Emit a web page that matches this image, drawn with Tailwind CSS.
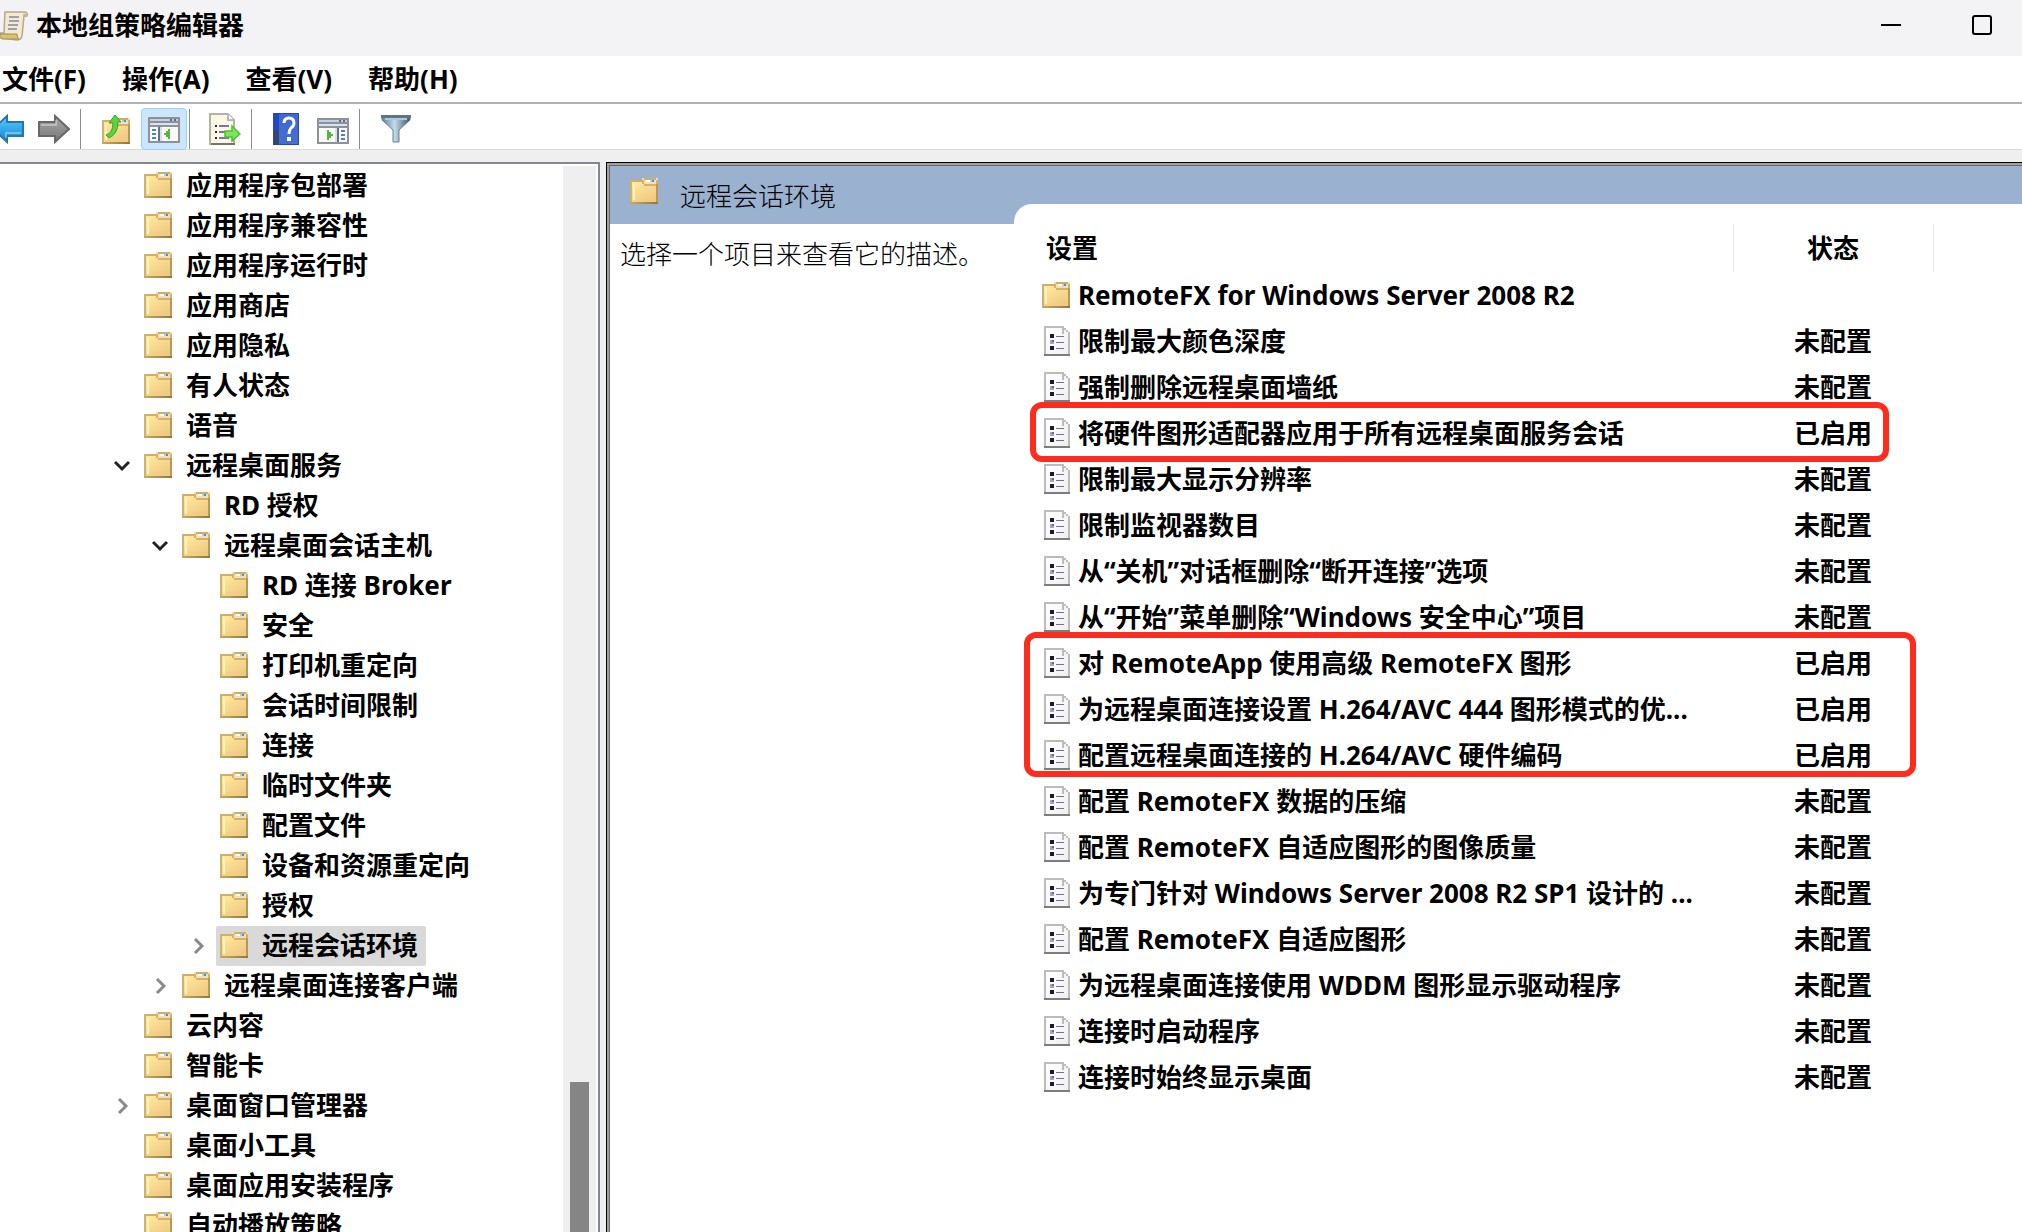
<!DOCTYPE html>
<html lang="zh-CN">
<head>
<meta charset="utf-8">
<meta name="viewport" content="width=device-width, initial-scale=1">
<title>本地组策略编辑器</title>
<script src="https://cdn.jsdelivr.net/npm/@tailwindcss/browser@4"></script>
</head>
<body class="flex h-screen flex-col overflow-hidden bg-[#efefef] font-['Noto_Sans','Noto_Sans_CJK_SC',sans-serif] text-[26px] leading-10 font-bold text-black">

<svg class="absolute size-0" aria-hidden="true">
  <defs>
    <linearGradient id="gFolder" x1="0" y1="0" x2="0.6" y2="1"><stop offset="0" stop-color="#ffeb9f"/><stop offset="1" stop-color="#f0ca82"/></linearGradient>
    <linearGradient id="gPage" x1="0" y1="0" x2="1" y2="1"><stop offset="0" stop-color="#ffffff"/><stop offset="1" stop-color="#f0f0f0"/></linearGradient>
    <linearGradient id="gBlue" x1="0" y1="0" x2="0" y2="1"><stop offset="0" stop-color="#1583d4"/><stop offset="1" stop-color="#58cdfb"/></linearGradient>
    <linearGradient id="gGray" x1="0" y1="0" x2="0" y2="1"><stop offset="0" stop-color="#a8a8a8"/><stop offset="1" stop-color="#777777"/></linearGradient>
    <linearGradient id="gHelp" x1="0" y1="0" x2="0" y2="1"><stop offset="0" stop-color="#3f66dd"/><stop offset="1" stop-color="#4570c8"/></linearGradient>
    <linearGradient id="gFunnel" x1="0" y1="0" x2="1" y2="0"><stop offset="0" stop-color="#5f7f98"/><stop offset="0.45" stop-color="#c4dcea"/><stop offset="1" stop-color="#3c5468"/></linearGradient>
    <linearGradient id="gEdge" x1="0" y1="0" x2="1" y2="0"><stop offset="0" stop-color="#c7a966"/><stop offset="1" stop-color="#94753a"/></linearGradient>
  </defs>
  <symbol id="folder" viewBox="0 0 28 26" shape-rendering="crispEdges">
    <path d="M0 2H12V0H28V26H0Z" fill="#d2ae64"/>
    <path d="M2 4H26V24H2Z" fill="url(#gFolder)"/>
    <path d="M4 6V22" stroke="#fff3b5" stroke-width="2"/>
    <path d="M0 2H2V24H0Z" fill="#cdb274"/>
    <path d="M26 6H28V24H26Z" fill="#b5985a"/>
    <path d="M0 24H28V26H0Z" fill="url(#gEdge)"/>
    <path d="M12 2H28V6H26V8H14V6H12Z" fill="#d8ae68"/>
    <path d="M14 2H26V6H14Z" fill="#f5dfb0"/>
    <path d="M16 2H20V4H16Z" fill="#ffffff"/><path d="M20 2H22V4H20Z" fill="#a8d3f5"/><path d="M22 2H24V4H22Z" fill="#3c94e4"/>
    <path d="M12 0H14V2H12ZM26 0H28V2H26Z" fill="#f0ddb4"/>
  </symbol>
  <symbol id="policy" viewBox="0 0 26 30" shape-rendering="crispEdges">
    <path d="M0 0H20V2H22V4H24V6H26V30H0Z" fill="#bcbcbc"/>
    <path d="M2 2H18V8H24V28H2Z" fill="url(#gPage)"/>
    <path d="M20 4H22V6H24V8H20Z" fill="#f4f4f4"/>
    <path d="M0 28H26V30H0Z" fill="#7d7d7d"/>
    <path d="M6 8H10V12H6ZM6 20H10V24H6Z" fill="#1d1a28"/><path d="M6 14H10V18H6Z" fill="#a9a4bd"/><path d="M8 14H10V16H8Z" fill="#6d6882"/>
    <path d="M12 10H20V11H12ZM12 16H20V17H12ZM12 22H20V23H12Z" fill="#77718f"/>
  </symbol>
  <symbol id="pane" viewBox="0 0 32 26" shape-rendering="crispEdges">
    <path d="M0 0H32V26H0Z" fill="#8e9298"/><path d="M2 2H30V4H2Z" fill="#c6d0dc"/>
    <path d="M2 4H30V6H2Z" fill="#8492a4"/>
    <path d="M2 6H30V8H2Z" fill="#dbe3ee"/><path d="M2 10H30V24H2Z" fill="#fafafa"/>
    <path d="M10 10H12V24H10Z" fill="#66728c"/><path d="M12 10H14V24H12Z" fill="#e0e0e0"/>
    <path d="M4 12H8V14H4ZM4 16H8V18H4ZM4 20H8V22H4Z" fill="#4d83bf"/>
    <path d="M22 12V22H20V20H18V18H16V16H18V14H20V12Z" fill="#55b838"/>
  </symbol>
  <symbol id="arrow" viewBox="0 0 32 30">
    <path d="M1 8H17V2L31 15L17 28V22H1Z" stroke-width="2"/>
    <path d="M3 11H18V6" fill="none" stroke="#ffffff" stroke-opacity=".35" stroke-width="2"/>
  </symbol>
</svg>

<header class="flex h-14 shrink-0 items-center bg-[#f3f2f4] pb-1.5">
  <svg class="h-8 w-7 shrink-0" viewBox="0 0 28 32" aria-hidden="true">
    <path d="M5 3H24Q28 3 27 7H24L22 27Q21 31 17 31L2 29Q-2 28 0 24H4Z" fill="#f3ead0" stroke="#b3a98d" stroke-width="1.5"/>
    <path d="M0 25H17Q17 29 19 30L2 30Q-1 28 0 25Z" fill="#dfc06d" stroke="#9c8b5c"/>
    <path d="M23 5Q27 4 27 8H24Z" fill="#c9b68a"/>
    <path d="M9 8H19M9 12H19M8 16H18M8 20H17" stroke="#9aa0b0" stroke-width="2"/>
  </svg>
  <h1 class="ml-2 flex-1">本地组策略编辑器</h1>
  <div class="mr-[30px] flex items-center gap-[71px]">
    <button aria-label="最小化" class="flex h-12 items-center"><svg class="size-5" viewBox="0 0 20 20"><path d="M0 10H20" stroke="#000" stroke-width="2"/></svg></button>
    <button aria-label="最大化" class="flex h-12 items-center"><svg class="size-5" viewBox="0 0 20 20"><rect x="1" y="1" width="18" height="18" rx="2" fill="none" stroke="#000" stroke-width="2"/></svg></button>
  </div>
</header>

<nav class="flex h-12 shrink-0 items-center gap-9 border-b-2 border-[#b1b2b6] bg-white pl-0.5" aria-label="菜单">
  <button>文件(F)</button><button>操作(A)</button><button>查看(V)</button><button>帮助(H)</button>
</nav>

<div class="flex h-[46px] shrink-0 items-center border-b border-[#d9d9d9] bg-white pt-1" role="toolbar" aria-label="工具栏">
  <button aria-label="后退" class="-ml-2"><svg class="h-[30px] w-8 rotate-180" fill="url(#gBlue)" stroke="#2676ae"><use href="#arrow"/></svg></button>
  <button aria-label="前进" class="ml-3.5"><svg class="h-[30px] w-8" fill="url(#gGray)" stroke="#686868"><use href="#arrow"/></svg></button>
  <span class="ml-2.5 h-10 w-px bg-[#8c8c8c]"></span>
  <button aria-label="上一级" class="ml-5">
    <svg class="h-[30px] w-[30px]" viewBox="0 0 30 30"><use href="#folder" x="1" y="4" width="28" height="26"/>
      <path d="M5 21Q12 19 12 9H8L14 1L20 8H17Q17 20 8 24Z" fill="#5bd340" stroke="#35a428"/></svg>
  </button>
  <button aria-label="显示/隐藏控制台树" class="ml-2.5 flex h-[42px] w-[46px] items-center justify-center rounded-sm border border-[#99d1ff] bg-[#cce6ff]"><svg class="mt-0.5 h-[26px] w-8"><use href="#pane"/><path d="M22 2H24V4H22ZM26 2H28V4H26Z" fill="#606a84"/></svg></button>
  <span class="ml-0.5 h-10 w-px bg-[#8c8c8c]"></span>
  <button aria-label="导出列表" class="ml-[19px]">
    <svg class="h-8 w-8" viewBox="0 0 32 32">
      <path d="M1 1H19L25 7V31H1Z" fill="#fdf8e4" stroke="#b3b1a8" stroke-width="2"/><path d="M19 1V7H25" fill="#fff" stroke="#b9b9b9" stroke-width="2"/>
      <path d="M2 31H26" stroke="#77736a" stroke-width="2"/>
      <path d="M6 13H8M6 19H8M6 25H8" stroke="#2a2740" stroke-width="2"/><path d="M10 13H20M10 19H16M10 25H20" stroke="#79749b" stroke-width="2"/>
      <path d="M16 18H23V13L31 21L23 28V24H16Z" fill="#7fe35d" stroke="#4dc22f" stroke-width="1.5"/></svg>
  </button>
  <span class="ml-2.5 h-10 w-px bg-[#8c8c8c]"></span>
  <button aria-label="帮助" class="ml-[21px]">
    <svg class="h-8 w-[26px]" viewBox="0 0 26 32"><path d="M0 0H26V32H0Z" fill="#2448b8"/><path d="M6 1H25V31H6Z" fill="url(#gHelp)"/><path d="M0 17H6V32H0Z" fill="#324678"/>
      <path d="M11 10Q11 5 16 5Q21 5 21 10Q21 13 18 15Q16 17 16 21" fill="none" stroke="#fff" stroke-width="3"/><path d="M14 24H18V28H14Z" fill="#fff"/></svg>
  </button>
  <button aria-label="显示/隐藏操作窗格" class="ml-[18px]"><svg class="mt-1 h-[26px] w-8"><use href="#pane" class="origin-center -scale-x-100"/><path d="M22 2H24V4H22ZM26 2H28V4H26Z" fill="#606a84"/></svg></button>
  <span class="ml-2.5 h-10 w-px bg-[#8c8c8c]"></span>
  <button aria-label="筛选器" class="ml-[21px]">
    <svg class="h-7 w-[30px]" viewBox="0 0 30 28"><path d="M1 1H29V5L18 15V27H12V15L1 5Z" fill="url(#gFunnel)" stroke="#6c8292" stroke-width="1"/><path d="M0 0H30V3H0Z" fill="#5d7587"/><path d="M4 4H26" stroke="#a9cbe0" stroke-width="2"/></svg>
  </button>
</div>

<main class="mt-3 flex min-h-0 flex-1">
  <aside class="flex w-[600px] shrink-0 border-t-2 border-r-2 border-[#828790] bg-white pt-0.5 pr-0.5">
    <ul id="tree" class="min-w-0 flex-1 overflow-hidden"></ul>
    <div class="flex w-[33px] flex-col items-center bg-[#efefef]">
      <div class="min-h-0 flex-[916]"></div>
      <div class="min-h-0 w-[19px] flex-[150] bg-[#858585]"></div>
    </div>
  </aside>

  <section class="ml-1.5 flex min-w-0 flex-1 border-t border-l border-black">
    <div class="flex min-w-0 flex-1 border-t-2 border-l-2 border-[#a0a0a0]">
      <div class="flex min-w-0 flex-1 border-t border-l border-[#696969] bg-[#9ab2cf]">
        <div class="flex w-[404px] shrink-0 flex-col font-light">
          <h2 class="flex h-[58px] shrink-0 pt-3 pl-5 leading-9"><svg class="h-[26px] w-7"><use href="#folder"/></svg><span class="ml-[22px]">远程会话环境</span></h2>
          <p class="flex-1 bg-white py-2.5 pl-2.5 whitespace-nowrap">选择一个项目来查看它的描述。</p>
        </div>
        <div class="relative mt-[38px] min-w-0 flex-1 rounded-tl-[18px] bg-white pt-5 pl-7">
          <table class="w-full table-fixed border-collapse text-left">
            <colgroup><col class="w-[691px]"><col class="w-[200px]"><col></colgroup>
            <thead><tr class="h-12"><th class="border-r border-[#e5e5e5] p-0 pl-1">设置</th><th class="border-r border-[#e5e5e5] p-0 text-center">状态</th><th class="p-0"></th></tr></thead>
            <tbody id="rows"></tbody>
          </table>
          <div class="absolute top-[198px] left-4 h-[60px] w-[859px] rounded-xl border-6 border-[#ff2b1d]"></div>
          <div class="absolute top-[428px] left-2.5 h-[145px] w-[892px] rounded-xl border-6 border-[#ff2b1d]"></div>
        </div>
      </div>
    </div>
  </section>
</main>

<script>
// Console tree: [depth, label, toggle state]
const tree = [
  [0, '应用程序包部署'], [0, '应用程序兼容性'], [0, '应用程序运行时'], [0, '应用商店'], [0, '应用隐私'], [0, '有人状态'], [0, '语音'],
  [0, '远程桌面服务', 'open'], [1, 'RD 授权'], [1, '远程桌面会话主机', 'open'],
  [2, 'RD 连接 Broker'], [2, '安全'], [2, '打印机重定向'], [2, '会话时间限制'], [2, '连接'], [2, '临时文件夹'], [2, '配置文件'], [2, '设备和资源重定向'], [2, '授权'],
  [2, '远程会话环境', 'closed', true], [1, '远程桌面连接客户端', 'closed'],
  [0, '云内容'], [0, '智能卡'], [0, '桌面窗口管理器', 'closed'], [0, '桌面小工具'], [0, '桌面应用安装程序'], [0, '自动播放策略']
];
const indent = ['pl-[104px]', 'pl-[142px]', 'pl-[180px]'];
const toggles = {
  open: '<button aria-label="折叠" class="flex h-10 w-9 items-center justify-center"><svg class="h-4 w-4" viewBox="0 0 16 16"><path d="M1 4L8 11L15 4" fill="none" stroke="#222" stroke-width="3"/></svg></button>',
  closed: '<button aria-label="展开" class="flex h-10 w-9 items-center justify-center"><svg class="h-4 w-4" viewBox="0 0 16 16"><path d="M5 1L12 8L5 15" fill="none" stroke="#8a8a8a" stroke-width="3"/></svg></button>'
};
document.getElementById('tree').innerHTML = tree.map(([d, t, s, on]) =>
  `<li class="flex h-10 leading-[38px] whitespace-nowrap ${indent[d]}">${toggles[s] || '<span class="w-9"></span>'}<a href="#" class="flex items-start gap-3.5 pr-2 pl-1 ${on ? 'rounded-xs bg-[#d9d9d9]' : ''}"><svg class="mt-1.5 h-[26px] w-7"><use href="#folder"/></svg><span>${t}</span></a></li>`).join('');

// Settings list: [label, enabled]
const rows = [
  ['限制最大颜色深度'], ['强制删除远程桌面墙纸'], ['将硬件图形适配器应用于所有远程桌面服务会话', 1], ['限制最大显示分辨率'], ['限制监视器数目'],
  ['从“关机”对话框删除“断开连接”选项'], ['从“开始”菜单删除“Windows 安全中心”项目'],
  ['对 RemoteApp 使用高级 RemoteFX 图形', 1], ['为远程桌面连接设置 H.264/AVC 444 图形模式的优...', 1], ['配置远程桌面连接的 H.264/AVC 硬件编码', 1],
  ['配置 RemoteFX 数据的压缩'], ['配置 RemoteFX 自适应图形的图像质量'], ['为专门针对 Windows Server 2008 R2 SP1 设计的 ...'],
  ['配置 RemoteFX 自适应图形'], ['为远程桌面连接使用 WDDM 图形显示驱动程序'], ['连接时启动程序'], ['连接时始终显示桌面']
];
const row = (icon, t, s) => `<tr class="h-[46px]"><td class="p-0"><div class="flex items-center whitespace-nowrap">${icon}<span class="ml-2">${t}</span></div></td><td class="p-0 text-center">${s}</td><td class="p-0"></td></tr>`;
document.getElementById('rows').innerHTML =
  row('<svg class="h-[26px] w-7 shrink-0"><use href="#folder"/></svg>', 'RemoteFX for Windows Server 2008 R2', '') +
  rows.map(([t, s]) => row('<svg class="ml-0.5 h-[30px] w-[26px] shrink-0"><use href="#policy"/></svg>', t, s ? '已启用' : '未配置')).join('');
</script>
</body>
</html>
